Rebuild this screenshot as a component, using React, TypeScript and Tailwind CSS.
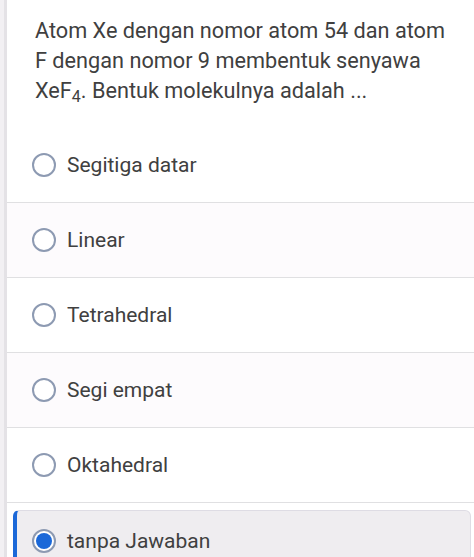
import React from 'react';

interface Option {
  label: string;
  tinted?: boolean;
}

const options: Option[] = [
  { label: 'Segitiga datar' },
  { label: 'Linear', tinted: true },
  { label: 'Tetrahedral' },
  { label: 'Segi empat', tinted: true },
  { label: 'Oktahedral' },
];

const Radio: React.FC<{ checked?: boolean }> = ({ checked }) => (
  <span className="flex h-[24px] w-[24px] shrink-0 items-center justify-center rounded-full border-[2px] border-[#8d9ab2] bg-white">
    {checked && <span className="h-[16px] w-[16px] rounded-full bg-[#1b68d8]" />}
  </span>
);

const App: React.FC = () => {
  return (
    <div className="flex h-[557px] w-[474px] overflow-hidden bg-white font-['Roboto',sans-serif] text-[#404040]">
      {/* left gutter */}
      <div className="w-[7px] shrink-0 border-r-[3px] border-[#e4e2e6] bg-[#f2f0f3]" />

      <div className="flex min-w-0 flex-1 flex-col">
        <div className="h-[128px] shrink-0 whitespace-nowrap pl-[28px] pt-[16px] text-[21.7px] leading-[30px]">
          Atom Xe dengan nomor atom 54 dan atom
          <br />
          F dengan nomor 9 membentuk senyawa
          <br />
          XeF<sub className="text-[16px] leading-none">4</sub>. Bentuk molekulnya adalah ...
        </div>

        {options.map((opt) => (
          <div
            key={opt.label}
            className={`flex h-[75px] shrink-0 items-center gap-[11px] border-b border-[#e0e0e2] pl-[25px] ${
              opt.tinted ? 'bg-[#fdfbfd]' : 'bg-white'
            }`}
          >
            <Radio />
            <span className="text-[21px] leading-none">{opt.label}</span>
          </div>
        ))}

        <div className="ml-[6px] mr-[3px] mt-[7px] flex h-[80px] shrink-0 items-start rounded-t-[6px] border border-l-[4px] border-[#dedce4] border-l-[#1b68d8] bg-[#efedf0] pl-[15px] pt-[18px]">
          <div className="flex items-center gap-[11px]">
            <Radio checked />
            <span className="text-[21px] leading-none">tanpa Jawaban</span>
          </div>
        </div>
      </div>
    </div>
  );
};

export default App;
